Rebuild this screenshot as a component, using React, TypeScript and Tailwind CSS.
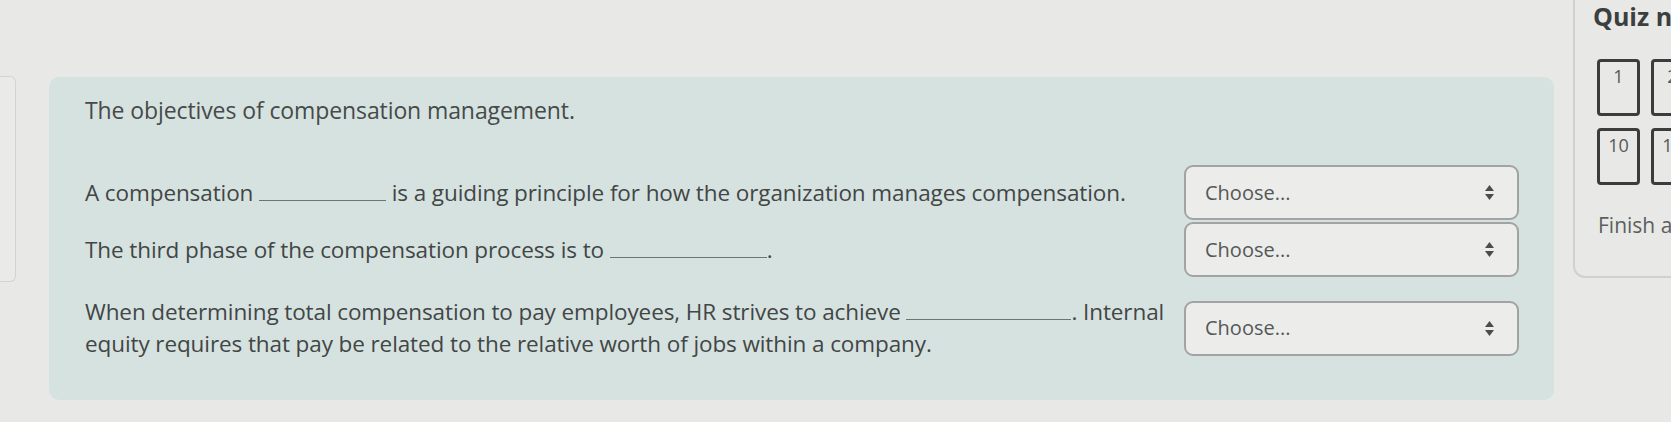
import type { ReactNode } from 'react';

const Blank = ({ w }: { w: string }) => (
  <span className={`inline-block ${w} border-b border-[#6f7372] h-[20px] align-baseline`} />
);

const SelectBox = () => (
  <div className="h-[55px] w-[335px] shrink-0 rounded-[9px] border-2 border-[#a2a4a3] bg-[#ecedeb] flex items-center justify-between pl-[19px] pr-[22px]">
    <span className="text-[20px] text-[#555858]">Choose...</span>
    <svg width="11" height="17" viewBox="0 0 11 17" className="text-[#4a4d4d]">
      <path d="M5.5 1 L10 7 H1 Z" fill="currentColor" />
      <path d="M5.5 16 L10 10 H1 Z" fill="currentColor" />
    </svg>
  </div>
);

const Row = ({ children, className }: { children: ReactNode; className: string }) => (
  <div className={`flex items-center ${className}`}>
    <div className="w-[1093px] mr-[6px] text-[22.5px] leading-[32px] tracking-[-0.1px]">{children}</div>
    <SelectBox />
  </div>
);

export default function App() {
  const navRows = [
    [1, 2, 3, 4, 5, 6, 7, 8, 9],
    [10, 11, 12, 13, 14, 15, 16, 17, 18],
  ];

  return (
    <div
      className="w-[1671px] h-[422px] bg-[#e8e9e6] flex items-start overflow-hidden text-[#424646]"
      style={{ fontFamily: '"Open Sans", "Liberation Sans", sans-serif' }}
    >
      {/* partly visible panel on the left */}
      <div className="w-[16px] shrink-0 mt-[76px] h-[206px] rounded-r-[6px] border border-l-0 border-[#d3d4d1] bg-[#eaebe8]" />

      {/* question card */}
      <div className="ml-[33px] mt-[77px] w-[1505px] h-[323px] shrink-0 rounded-[10px] bg-[#d6e2df] pl-[36px] pr-[30px] pt-[18px]">
        <div className="text-[23px] leading-[30px] tracking-[-0.1px] text-[#464a4a]">The objectives of compensation management.</div>

        <Row className="mt-[40px] h-[55px]">
          A compensation <Blank w="w-[127px]" /> is a guiding principle for how the organization manages compensation.
        </Row>

        <Row className="mt-[2px] h-[55px]">
          The third phase of the compensation process is to <Blank w="w-[157px]" />.
        </Row>

        <Row className="mt-[19px] h-[64px]">
          When determining total compensation to pay employees, HR strives to achieve <Blank w="w-[165px]" />. Internal
          equity requires that pay be related to the relative worth of jobs within a company.
        </Row>
      </div>

      {/* quiz navigation block */}
      <div className="ml-[19px] flex-1 h-[278px] border-l-2 border-b-2 border-[#d0d1ce] rounded-bl-[12px] pl-[18px] pt-[1px] overflow-hidden">
        <div className="text-[25px] leading-[30px] font-bold text-[#3c3f3f] whitespace-nowrap">Quiz navigation</div>
        <div className="mt-[28px] ml-[4px] flex flex-col gap-[12px]">
          {navRows.map((row, i) => (
            <div key={i} className="flex gap-[11px]">
              {row.map((n) => (
                <div
                  key={n}
                  className="w-[43px] h-[57px] shrink-0 rounded-[4px] border-[3px] border-[#3b3d3d] flex justify-center pt-[2px] text-[18px] leading-[24px] text-[#555858]"
                >
                  {n}
                </div>
              ))}
            </div>
          ))}
        </div>
        <div className="mt-[26px] ml-[5px] text-[21px] leading-[28px] text-[#5c5f5f] whitespace-nowrap">Finish attempt ...</div>
      </div>
    </div>
  );
}
